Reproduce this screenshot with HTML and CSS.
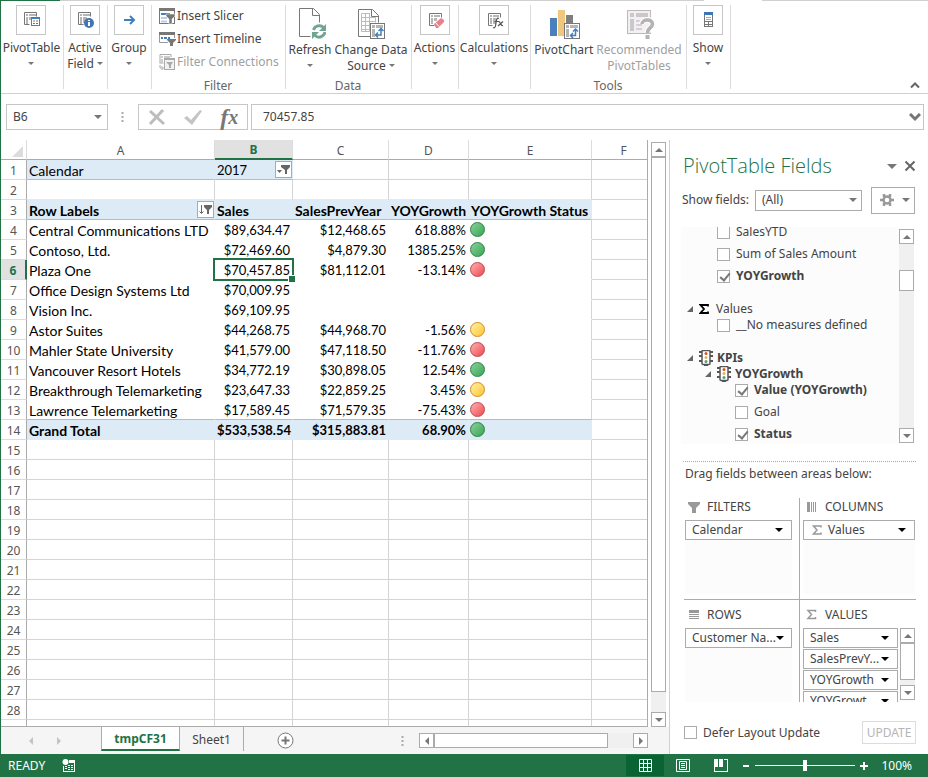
FILE: index.html
```html
<!DOCTYPE html>
<html lang="en">
<head>
<meta charset="utf-8">
<title>PivotTable workbook</title>
<link rel="stylesheet" href="styles.css">
</head>
<body>
<div class="app">
  <div class="tab-edge"><span class="edge-green"></span><span class="edge-gray"></span><span class="edge-open"></span><span class="edge-end"></span></div>
  <header class="ribbon">
    <section class="group g-pivot">
      <button class="big boxed"><span class="box"><svg width="28" height="28" viewBox="1 0 28 28"><path d="M8.500 6.500h12v4M8.500 6.500v12h5" fill="none" stroke="#777"/><path d="M10 8h2v2h-2zM13 8h7v2h-7zM10 11h2v7h-2zM13 11h3v3h-3z" fill="#b5b5b5"/><rect x="15.500" y="11.500" width="8" height="8" fill="#fff" stroke="#777"/><path d="M15 11h9v2h-9z" fill="#3f7fbf"/><path d="M17 15h2M20 15h2M17 17.500h2M20 17.500h2" stroke="#777"/></svg></span><span class="label">PivotTable</span><i class="caret"></i></button>
    </section>
    <section class="group g-small">
      <button class="big boxed"><span class="box"><svg width="28" height="28" viewBox="1 0 28 28"><path d="M8.500 6.500h12v4M8.500 6.500v12h5" fill="none" stroke="#777"/><path d="M10 8h2v2h-2zM13 8h7v2h-7zM10 11h2v7h-2zM13 11h4v6h-4z" fill="#b5b5b5"/><circle cx="19" cy="17" r="5" fill="#3f76b5"/><path d="M18 14h2v1h-2zM18 16h2v4h-2z" fill="#fff"/></svg></span><span class="label">Active<br>Field<i class="caret inline"></i></span></button>
    </section>
    <section class="group g-small">
      <button class="big boxed"><span class="box"><svg width="28" height="28" viewBox="0 0 28 28"><path d="M9 14h9M15 10l4 4-4 4" fill="none" stroke="#3f7fbf" stroke-width="2"/></svg></span><span class="label">Group</span><i class="caret"></i></button>
    </section>
    <section class="group g-filter">
      <div class="rows">
        <button class="small"><svg width="17" height="17" viewBox="0 0 17 17"><rect x=".5" y=".5" width="15" height="15" fill="#fff" stroke="#777"/><path d="M0 0h16v3H0z" fill="#777"/><path d="M2 5h9v2H2z" fill="#3f7fbf"/><path d="M2 9h6v2H2zM2 12.500h6v2H2z" fill="#b9cfe8"/><path d="M7 6h9v2l-3 3v5h-3v-5L7 8z" fill="#777" stroke="#fff" stroke-width=".5"/></svg>Insert Slicer</button>
        <button class="small"><svg width="17" height="17" viewBox="0 0 17 17"><path d="M.5 2v9.500H9M15.500 2v5" fill="none" stroke="#999"/><path d="M0 1h16v3H0z" fill="#777"/><path d="M2 7h2M5 7h3M9 7h2" stroke="#3f7fbf" stroke-width="2"/><path d="M8 8h9v1l-3 3v3h-3v-3L8 9z" fill="#777"/></svg>Insert Timeline</button>
        <button class="small" disabled><svg width="17" height="17" viewBox="0 0 17 17"><path d="M1 9V.500h11V3M.500 9h4" fill="none" stroke="#aaa"/><path d="M2 2h2v2H2zM5 2h6v2H5zM2 5h2v4H2z" fill="#ccc"/><rect x="5.500" y="4.500" width="10" height="11" fill="#f5f0f5" stroke="#aaa"/><path d="M5 4h11v2H5zM7 8h7l-2 3v3h-2v-3z" fill="#aaa"/><path d="M1 11v3h3M2.500 12.500L4.500 14l-2 2" fill="none" stroke="#aaa"/></svg>Filter Connections</button>
      </div>
      <span class="caption">Filter</span>
    </section>
    <section class="group g-data">
      <div class="pair">
        <button class="big plain"><svg width="32" height="32" viewBox="0 0 32 32"><path d="M5.500.500h14l6 6v8M5.500.500v28h11M18.500.500v7h7" fill="#fff" stroke="#777"/><g fill="none" stroke="#72a591" stroke-width="3"><path d="M19.500 22a6 6 0 0 1 10-2.500M31 24a6 6 0 0 1-10 3.500"/></g><path d="M32 16v7h-7zM18 31v-7h7z" fill="#72a591"/></svg><span class="label">Refresh</span><i class="caret"></i></button>
        <button class="big plain"><svg width="32" height="32" viewBox="0 0 32 32"><path d="M3.500 1.500h14l6 6v7M3.500 1.500v27h12M16.500 1.500v7h7" fill="#fff" stroke="#777"/><path d="M6.500 5.500h8v4h6v5M6.500 5.500v18h8M6.500 9.500h8M6.500 13.500h14M6.500 17.500h8M6.500 21.500h8M10.500 5.500v18M14.500 5.500v18" fill="none" stroke="#bbb"/><rect x="15.500" y="15.500" width="14" height="15" fill="#fff" stroke="#777"/><path d="M17 17h3v3h-3zM21 17h7v3h-7zM17 21h3v8h-3z" fill="#b5b5b5"/><path d="M21 27h5v-6M23 24.500L20.500 27l2.500 2.500M23.500 23L26 20.500l2.500 2.500" fill="none" stroke="#3f7fbf" stroke-width="1.500"/></svg><span class="label">Change Data<br>Source<i class="caret inline"></i></span></button>
      </div>
      <span class="caption">Data</span>
    </section>
    <section class="group g-actions">
      <button class="big boxed"><span class="box"><svg width="28" height="28" viewBox="0 0 28 28"><path d="M8.500 7.500h12v4M8.500 7.500v12h5" fill="none" stroke="#777"/><path d="M10 9h2v2h-2zM13 9h6v2h-6zM10 12h2v6h-2zM13 12h3v3h-3z" fill="#b5b5b5"/><path d="M13 18l7-6 3 2v2l-6 6h-2z" fill="#e8818f"/><path d="M14.500 16.500l3.500 4" stroke="#fff"/></svg></span><span class="label">Actions</span><i class="caret"></i></button>
    </section>
    <section class="group g-calc">
      <button class="big boxed"><span class="box"><svg width="28" height="28" viewBox="0 0 28 28"><path d="M8.500 7.500h12v4M8.500 7.500v12h4" fill="none" stroke="#777"/><path d="M10 9h2v2h-2zM13 9h6v2h-6zM10 12h2v6h-2zM13 12h3v6h-3z" fill="#b5b5b5"/><path d="M19 12.500c-2-1-2.500 1-2.800 3l-.7 4.500c-.4 2-1.500 2-2.500 1.500M14.500 15.500h4M18.500 15.500c2-.5 2 5 4.500 4M23 15.500l-5 4.500" fill="none" stroke="#555" stroke-width="1.200"/></svg></span><span class="label">Calculations</span><i class="caret"></i></button>
    </section>
    <section class="group g-tools">
      <div class="pair">
        <button class="big plain"><svg width="32" height="32" viewBox="0 0 32 32"><path d="M2 10h7v18H2z" fill="#4a80bd"/><path d="M10 2h7v26h-7z" fill="#efc77e"/><path d="M18 7h7v8h-7z" fill="#7f7f7f"/><rect x="16.500" y="15.500" width="15" height="15" fill="#fff" stroke="#777"/><path d="M18 17h3v3h-3zM22 17h8v3h-8zM18 21h3v8h-3z" fill="#b5b5b5"/><path d="M23 27.500h4.500V21M25 25l-2.500 2.500L25 30M25 23.500l2.500-2.500 2.500 2.500" fill="none" stroke="#3f7fbf" stroke-width="1.500"/></svg><span class="label">PivotChart</span></button>
        <button class="big plain" disabled><svg width="32" height="32" viewBox="0 0 32 32"><rect x="4.500" y="2.500" width="23" height="23" fill="#f3eff3" stroke="#bdb8bd"/><path d="M7 5h4v4H7zM13 5h12v4H13zM7 11h4v12H7z" fill="#c9c9c9"/><path d="M13 12h6v2h-6zM13 16h6v2h-6zM13 20h6v2h-6z" fill="#d5d0d5"/><path d="M19 16c0-5 10.500-5.500 10.500 0 0 4-5 3.500-5 9" fill="none" stroke="#fff" stroke-width="6"/><path d="M19 16c0-5 10.500-5.500 10.500 0 0 4-5 3.500-5 9" fill="none" stroke="#b3b3b3" stroke-width="3.500"/><path d="M22.500 27h4v4h-4z" fill="#b3b3b3"/></svg><span class="label">Recommended<br>PivotTables</span></button>
      </div>
      <span class="caption">Tools</span>
    </section>
    <section class="group g-small">
      <button class="big boxed"><span class="box"><svg width="28" height="28" viewBox="0 0 28 28"><rect x="10.500" y="7.500" width="8" height="13" fill="#fff" stroke="#777"/><path d="M10 6h9v3h-9z" fill="#3f76b5"/><path d="M12 11.500h5M12 13.500h5" stroke="#aaa"/><path d="M10 15.500h9M10 18.500h9M14.500 15v6" stroke="#777"/></svg></span><span class="label">Show</span><i class="caret"></i></button>
    </section>
    <button class="collapse" aria-label="Collapse ribbon"><svg width="10" height="7" viewBox="0 0 10 7"><path d="M1 5.500L5 1.500l4 4" fill="none" stroke="#666" stroke-width="2"/></svg></button>
  </header>

  <div class="formula-bar">
    <div class="name-box"><input type="text" value="B6" aria-label="Name box"><i class="caret wide"></i></div>
    <svg class="grip" width="3" height="12" viewBox="0 0 3 12"><path d="M.5 1h2v2h-2zM.5 5h2v2h-2zM.5 9h2v2h-2z" fill="#aaa"/></svg>
    <div class="fx-box">
      <button aria-label="Cancel"><svg width="18" height="18" viewBox="0 0 18 18"><path d="M2 3l14 13M15 2L2 16" fill="none" stroke="#bdbdbd" stroke-width="3"/></svg></button>
      <button aria-label="Enter"><svg width="20" height="18" viewBox="0 0 20 18"><path d="M1 10l3-2 4 4L17 2l2 1L9 17z" fill="#c4c4c4"/></svg></button>
      <button aria-label="Insert function" class="fx">f<span>x</span></button>
    </div>
    <div class="formula"><input type="text" value="70457.85" aria-label="Formula"><svg width="12" height="9" viewBox="0 0 12 9"><path d="M1 1l5 5 5-5" fill="none" stroke="#777" stroke-width="3"/></svg></div>
  </div>

  <main class="workspace">
    <div class="sheet-side">
      <div class="sheet-row">
        <table class="grid">
          <colgroup><col class="c-head"><col class="c-a"><col class="c-b"><col class="c-c"><col class="c-d"><col class="c-e"><col></colgroup>
          <thead><tr><th class="corner"><svg width="11" height="11" viewBox="0 0 11 11"><path d="M11 0v11H0z" fill="#dcdcdc"/></svg></th><th>A</th><th class="on">B</th><th>C</th><th>D</th><th>E</th><th>F</th></tr></thead>
          <tbody>
            <tr class="page-filter"><th>1</th><td>Calendar</td><td><div class="with-btn">2017<button class="filter" aria-label="Filter calendar"><svg width="15" height="15" viewBox="0 0 15 15"><path d="M5 3h9v2l-3 3v4H9V8L5 5z" fill="#666"/><path d="M1 8h5l-2.500 3z" fill="#666"/></svg></button></div></td><td></td><td></td><td></td><td></td></tr>
            <tr class="before-head"><th>2</th><td></td><td></td><td></td><td></td><td></td><td></td></tr>
            <tr class="pivot-head"><th>3</th><td><div class="with-btn">Row Labels<button class="filter" aria-label="Filter rows"><svg width="15" height="15" viewBox="0 0 15 15"><path d="M6 3h8v2l-3 3v4H9V8L6 5z" fill="#666"/><path d="M3.500 3v8M1.500 9.500l2 2 2-2" fill="none" stroke="#666"/></svg></button></div></td><td>Sales</td><td>SalesPrevYear</td><td>YOYGrowth</td><td>YOYGrowth Status</td><td></td></tr>
            <tr class="pv"><th>4</th><td>Central Communications LTD</td><td>$89,634.47</td><td>$12,468.65</td><td>618.88%</td><td><i class="kpi green"></i></td><td></td></tr>
            <tr class="pv"><th>5</th><td>Contoso, Ltd.</td><td>$72,469.60</td><td>$4,879.30</td><td>1385.25%</td><td><i class="kpi green"></i></td><td></td></tr>
            <tr class="pv"><th class="on">6</th><td>Plaza One</td><td class="selected">$70,457.85</td><td>$81,112.01</td><td>-13.14%</td><td><i class="kpi red"></i></td><td></td></tr>
            <tr class="pv"><th>7</th><td>Office Design Systems Ltd</td><td>$70,009.95</td><td></td><td></td><td></td><td></td></tr>
            <tr class="pv"><th>8</th><td>Vision Inc.</td><td>$69,109.95</td><td></td><td></td><td></td><td></td></tr>
            <tr class="pv"><th>9</th><td>Astor Suites</td><td>$44,268.75</td><td>$44,968.70</td><td>-1.56%</td><td><i class="kpi yellow"></i></td><td></td></tr>
            <tr class="pv"><th>10</th><td>Mahler State University</td><td>$41,579.00</td><td>$47,118.50</td><td>-11.76%</td><td><i class="kpi red"></i></td><td></td></tr>
            <tr class="pv"><th>11</th><td>Vancouver Resort Hotels</td><td>$34,772.19</td><td>$30,898.05</td><td>12.54%</td><td><i class="kpi green"></i></td><td></td></tr>
            <tr class="pv"><th>12</th><td>Breakthrough Telemarketing</td><td>$23,647.33</td><td>$22,859.25</td><td>3.45%</td><td><i class="kpi yellow"></i></td><td></td></tr>
            <tr class="pv last"><th>13</th><td>Lawrence Telemarketing</td><td>$17,589.45</td><td>$71,579.35</td><td>-75.43%</td><td><i class="kpi red"></i></td><td></td></tr>
            <tr class="pv total"><th>14</th><td>Grand Total</td><td>$533,538.54</td><td>$315,883.81</td><td>68.90%</td><td><i class="kpi green"></i></td><td></td></tr>
            <tr><th>15</th><td></td><td></td><td></td><td></td><td></td><td></td></tr>
            <tr><th>16</th><td></td><td></td><td></td><td></td><td></td><td></td></tr>
            <tr><th>17</th><td></td><td></td><td></td><td></td><td></td><td></td></tr>
            <tr><th>18</th><td></td><td></td><td></td><td></td><td></td><td></td></tr>
            <tr><th>19</th><td></td><td></td><td></td><td></td><td></td><td></td></tr>
            <tr><th>20</th><td></td><td></td><td></td><td></td><td></td><td></td></tr>
            <tr><th>21</th><td></td><td></td><td></td><td></td><td></td><td></td></tr>
            <tr><th>22</th><td></td><td></td><td></td><td></td><td></td><td></td></tr>
            <tr><th>23</th><td></td><td></td><td></td><td></td><td></td><td></td></tr>
            <tr><th>24</th><td></td><td></td><td></td><td></td><td></td><td></td></tr>
            <tr><th>25</th><td></td><td></td><td></td><td></td><td></td><td></td></tr>
            <tr><th>26</th><td></td><td></td><td></td><td></td><td></td><td></td></tr>
            <tr><th>27</th><td></td><td></td><td></td><td></td><td></td><td></td></tr>
            <tr><th>28</th><td></td><td></td><td></td><td></td><td></td><td></td></tr>
            <tr class="cut"><th></th><td></td><td></td><td></td><td></td><td></td><td></td></tr>
          </tbody>
        </table>
        <div class="vscroll sheet-scroll"><button class="sb" aria-label="Scroll up"><i class="tri up"></i></button><span class="thumb"></span><span class="track"></span><button class="sb" aria-label="Scroll down"><i class="tri down"></i></button></div>
      </div>
      <nav class="tabs">
        <div class="tab-nav"><button aria-label="Previous sheet"><i class="tri left pale"></i></button><button aria-label="Next sheet"><i class="tri right pale"></i></button></div>
        <button class="tab active">tmpCF31</button>
        <button class="tab">Sheet1</button>
        <button class="add" aria-label="New sheet"><svg width="17" height="17" viewBox="0 0 17 17"><circle cx="8.500" cy="8.500" r="7.500" fill="#fff" stroke="#777"/><path d="M4.500 8.500h8M8.500 4.500v8" stroke="#777" stroke-width="2"/></svg></button>
        <svg class="grip" width="3" height="12" viewBox="0 0 3 12"><path d="M.5 1h2v2h-2zM.5 5h2v2h-2zM.5 9h2v2h-2z" fill="#aaa"/></svg>
        <div class="hscroll"><button class="sb" aria-label="Scroll left"><i class="tri left"></i></button><span class="thumb"></span><span class="track"></span><button class="sb" aria-label="Scroll right"><i class="tri right"></i></button></div>
      </nav>
    </div>

    <aside class="pane">
      <div class="pane-title"><h2>PivotTable Fields</h2><button aria-label="Pane options"><i class="caret title-caret"></i></button><button aria-label="Close"><svg width="12" height="12" viewBox="0 0 12 12"><path d="M1.500 1.500l9 9M10.500 1.500l-9 9" stroke="#666" stroke-width="2"/></svg></button></div>
      <div class="show-fields">
        <label for="show">Show fields:</label>
        <span class="select"><select id="show"><option>(All)</option></select><i class="caret wide"></i></span>
        <button class="gear" aria-label="Tools"><svg width="14" height="14" viewBox="0 0 14 14"><circle cx="7" cy="7" r="3.500" fill="none" stroke="#999" stroke-width="2.500"/><path d="M4 1v3M10 1v3M4 10v3M10 10v3M0 7h3M11 7h3" stroke="#999" stroke-width="2.500"/></svg><i class="caret wide"></i></button>
      </div>
      <div class="field-box">
        <div class="field-list">
          <label class="item d1"><input type="checkbox">SalesYTD</label>
          <label class="item d1 gap"><input type="checkbox">Sum of Sales Amount</label>
          <label class="item d1 gap"><input type="checkbox" checked><b>YOYGrowth</b></label>
          <div class="item section"><i class="expand"></i><svg width="10" height="10" viewBox="0 0 10 10"><path d="M9 2.500V1H1.500L5 5 1.500 9H9V7.500" fill="none" stroke="#000" stroke-width="1.800"/></svg><span class="values-name">Values</span></div>
          <label class="item d1"><input type="checkbox">__No measures defined</label>
          <div class="item section"><i class="expand"></i><svg width="14" height="16" viewBox="0 0 14 16"><path d="M0 2h3M0 6h3M0 11h3M11 2h3M11 6h3M11 11h3M5 15.500h4" stroke="#555" stroke-width="2"/><rect x="3" y=".5" width="8" height="14" rx="1" fill="#fff" stroke="#555" stroke-width="1.500"/><circle cx="7" cy="3.500" r="1.500" fill="#d9542b"/><circle cx="7" cy="7.500" r="1.500" fill="#eab14d"/><circle cx="7" cy="11.500" r="1.500" fill="#4fa08a"/></svg><b>KPIs</b></div>
          <div class="item sub"><i class="expand"></i><svg width="14" height="16" viewBox="0 0 14 16"><path d="M0 2h3M0 6h3M0 11h3M11 2h3M11 6h3M11 11h3M5 15.500h4" stroke="#555" stroke-width="2"/><rect x="3" y=".5" width="8" height="14" rx="1" fill="#fff" stroke="#555" stroke-width="1.500"/><circle cx="7" cy="3.500" r="1.500" fill="#d9542b"/><circle cx="7" cy="7.500" r="1.500" fill="#eab14d"/><circle cx="7" cy="11.500" r="1.500" fill="#4fa08a"/></svg><b>YOYGrowth</b></div>
          <label class="item d2"><input type="checkbox" checked><b>Value (YOYGrowth)</b></label>
          <label class="item d2 gap"><input type="checkbox">Goal</label>
          <label class="item d2 gap"><input type="checkbox" checked><b>Status</b></label>
        </div>
        <div class="vscroll list-scroll"><button class="sb" aria-label="Scroll up"><i class="tri up"></i></button><span class="track lead"></span><span class="thumb"></span><span class="track"></span><button class="sb" aria-label="Scroll down"><i class="tri down"></i></button></div>
      </div>
      <p class="drag">Drag fields between areas below:</p>
      <div class="areas">
        <section class="area left top"><h3><svg width="12" height="12" viewBox="0 0 12 12"><path d="M0 1h12v2L8 7v5H4V7L0 3z" fill="#999"/></svg>FILTERS</h3><div class="drop"><button class="chip">Calendar<i class="tri down black"></i></button></div></section>
        <section class="area right top"><h3><svg width="12" height="12" viewBox="0 0 12 12"><path d="M1 1h3v10H1zM5 1h1v10H5zM7 1h1v10H7zM9 1h1v10H9z" fill="#999"/></svg>COLUMNS</h3><div class="drop"><button class="chip"><svg width="10" height="10" viewBox="0 0 10 10"><path d="M9 2.500V1H1.500L5 5 1.500 9H9V7.500" fill="none" stroke="#999" stroke-width="1.500"/></svg>Values<i class="tri down black"></i></button></div></section>
        <section class="area left"><h3><svg width="12" height="12" viewBox="0 0 12 12"><path d="M1 1h10v3H1zM1 5h10v1H1zM1 7h10v1H1zM1 9h10v1H1z" fill="#999"/></svg>ROWS</h3><div class="drop"><button class="chip">Customer Na...<i class="tri down black"></i></button></div></section>
        <section class="area right"><h3><svg width="12" height="12" viewBox="0 0 12 12"><path d="M9.500 3V1.500H2L5.500 5.500 2 9.500h7.500V8" fill="none" stroke="#999" stroke-width="1.500"/></svg>VALUES</h3><div class="drop scrolling"><div class="chips"><button class="chip">Sales<i class="tri down black"></i></button><button class="chip">SalesPrevY...<i class="tri down black"></i></button><button class="chip">YOYGrowth<i class="tri down black"></i></button><button class="chip">YOYGrowt...<i class="tri down black"></i></button></div>
          <div class="vscroll area-scroll"><button class="sb" aria-label="Scroll up"><i class="tri up"></i></button><span class="thumb"></span><span class="track"></span><button class="sb" aria-label="Scroll down"><i class="tri down"></i></button></div></div></section>
      </div>
      <div class="defer"><label><input type="checkbox">Defer Layout Update</label><button disabled>UPDATE</button></div>
    </aside>
  </main>

  <footer class="status">
    <span>READY</span>
    <svg class="macro" width="14" height="14" viewBox="0 0 14 14"><path d="M7 1h6v3H7zM1 7h1v6H1zM1 12h12v1H1zM12 4h1v9h-1z" fill="#fff"/><path d="M3 7h2v1H3zM6 6h2v1H6zM9 6h2v1H9zM3 9h2v1H3zM6 8h2v1H6zM9 8h2v1H9zM3 11h2M6 10h2v1H6zM9 10h2v1H9z" fill="#fff"/><circle cx="3.500" cy="3" r="3" fill="#fff"/></svg>
    <button class="view on" aria-label="Normal view"><svg width="13" height="13" viewBox="0 0 13 13"><path d="M.5.5h12v12H.5zM4.500 0v13M8.500 0v13M0 4.500h13M0 8.500h13" fill="none" stroke="#fff"/></svg></button>
    <button class="view" aria-label="Page layout"><svg width="14" height="13" viewBox="0 0 14 13"><path d="M.5.5h13v12H.5zM3.500 2.500h7v8h-7zM5 4.500h4M5 6.500h4M5 8.500h4" fill="none" stroke="#fff"/></svg></button>
    <button class="view" aria-label="Page break preview"><svg width="14" height="13" viewBox="0 0 14 13"><path d="M0 0h4v8H0zM5 0h4v8H5zM13 0h1v13h-1zM0 12h14v1H0zM0 8h1v5H0zM10 0h4v1h-4z" fill="#fff"/></svg></button>
    <button class="zoom-btn" aria-label="Zoom out"><svg width="8" height="8" viewBox="0 0 8 8"><path d="M1 4h6" stroke="#fff" stroke-width="2"/></svg></button>
    <input class="zoom" type="range" min="0" max="100" value="50" aria-label="Zoom">
    <button class="zoom-btn" aria-label="Zoom in"><svg width="8" height="8" viewBox="0 0 8 8"><path d="M0 4h8M4 0v8" stroke="#fff" stroke-width="2"/></svg></button>
    <span class="percent">100%</span>
  </footer>
</div>
</body>
</html>
```
FILE: styles.css
```css
* { box-sizing: border-box; }
body { margin: 0; background: #fff; color: #444; font: 12px/16px "Noto Sans", "Open Sans", sans-serif; }
button, input, select { font: inherit; color: inherit; margin: 0; padding: 0; border: 0; background: none; border-radius: 0; }
button { display: flex; align-items: center; justify-content: center; white-space: nowrap; }
svg { display: block; flex: none; }
h2, h3, p { margin: 0; font-weight: 400; }

.app { display: flex; flex-direction: column; min-height: 100vh; border-left: 1px solid #217346; }

.tab-edge { display: flex; height: 1px; }
.edge-green { width: 59px; background: #217346; }
.edge-gray { width: 644px; background: #d0d0d0; }
.edge-open { width: 58px; }
.edge-end { flex: 1; background: #d0d0d0; }

/* Ribbon */
.ribbon { display: flex; height: 93px; padding-top: 4px; border-bottom: 1px solid #d0d0d0; }
.group { position: relative; display: flex; flex-direction: column; align-items: center; padding-right: 2px; }
.group::after { content: ""; position: absolute; top: 0; right: 0; bottom: 4px; width: 1px; background: #dcdcdc; }
.g-pivot { width: 63px; }
.g-small { width: 44px; }
.g-filter { width: 134px; }
.g-data { width: 126px; }
.g-actions { width: 47px; }
.g-calc { width: 72px; }
.g-tools { width: 156px; }
.big { flex-direction: column; justify-content: flex-start; text-align: center; }
.box { border: 1px solid #c6c6c6; margin-bottom: 5px; }
.plain { padding-top: 3px; gap: 2px; }
.plain .caret { margin-top: 4px; }
.pair { display: flex; justify-content: center; gap: 3px; flex: 1; }
.pair .big { height: 70px; }
.rows { display: flex; flex-direction: column; gap: 7px; width: 100%; padding: 3px 0 0 7px; flex: 1; }
.small { justify-content: flex-start; gap: 1px; height: 16px; }
.caption { line-height: 15px; color: #666; }
button:disabled { color: #a0a0a0; }
.caret { flex: none; width: 0; height: 0; border: 3px solid transparent; border-top-color: #777; border-bottom: 0; }
.caret.wide { border-width: 4px; border-bottom: 0; }
.caret.inline { display: inline-block; margin-left: 3px; vertical-align: 3px; }
.boxed > .caret { margin-top: 6px; }
.collapse { margin: auto 8px 4px auto; }

/* Formula bar */
.formula-bar { display: flex; align-items: center; height: 46px; padding: 0 4px 0 5px; }
.name-box, .fx-box, .formula { display: flex; align-items: center; height: 26px; border: 1px solid #c6c6c6; }
.name-box { width: 102px; padding: 0 5px 0 6px; }
.name-box input { flex: 1; min-width: 0; }
.formula-bar .grip { margin: 0 14px 0 13px; }
.fx-box { width: 110px; margin-right: 3px; justify-content: space-around; }
.fx { font: italic bold 24px/24px "Liberation Serif", serif; color: #777; }
.fx span { font-size: 20px; }
.formula { flex: 1; padding: 0 2px 0 11px; }
.formula input { flex: 1; }

/* Worksheet */
.workspace { display: flex; flex: 1; }
.sheet-side { display: flex; flex-direction: column; flex: 1; min-width: 0; border-right: 1px solid #d0d0d0; }
.sheet-row { display: flex; }
.grid { flex: 1; table-layout: fixed; width: 0; border-spacing: 0; border-right: 1px solid #ababab; border-bottom: 1px solid #ababab; color: #000; font: 13px/17px Lato, sans-serif; }
.c-head { width: 26px; }
.c-a { width: 188px; }
.c-b { width: 78px; }
.c-c { width: 96px; }
.c-d { width: 80px; }
.c-e { width: 123px; }
.grid th { height: 20px; padding: 2px 0 0; border-bottom: 1px solid #dcdcdc; font: 12px/17px "Noto Sans", sans-serif; color: #555; text-align: center; }
.grid thead th { border-right: 1px solid #dcdcdc; border-bottom-color: #ababab; }
.grid thead th:last-child { border-right: 0; padding-left: 8px; }
.corner svg { margin: 2px 3px 0 auto; }
.grid tbody th { border-right: 1px solid #ababab; }
.grid th.on { background: #e1e1e1; color: #217346; font-weight: 700; }
.grid thead th.on { border-bottom: 2px solid #217346; line-height: 16px; }
.grid tbody th.on { border-right: 2px solid #217346; }
.grid td { height: 20px; padding: 2px 2px 0; border-right: 1px solid #d4d4d4; border-bottom: 1px solid #d4d4d4; white-space: nowrap; }
.grid td:last-child { border-right: 0; }
.grid td:nth-child(2), .pivot-head td { font-size: 14px; }
.grid .cut th, .grid .cut td { height: 6px; border-bottom: 0; }
.page-filter td:nth-child(-n+3), .pivot-head td:nth-child(-n+6) { background: #ddebf7; border-right-color: #ddebf7; border-bottom-color: #9bc2e6; }
.before-head td:nth-child(-n+6) { border-bottom-color: #ddebf7; }
.pivot-head td { font-weight: 700; }
.pv td:nth-child(-n+6) { border-bottom-color: transparent; }
.pv td:nth-child(-n+5) { border-right-color: transparent; }
.pv td:nth-child(n+3):nth-child(-n+5) { text-align: right; }
.last td:nth-child(-n+6) { border-bottom-color: #9bc2e6; }
.total td:nth-child(-n+6) { background: #ddebf7; border-color: #ddebf7; font-weight: 700; }
.with-btn { display: flex; justify-content: space-between; align-items: center; height: 17px; }
.filter { width: 17px; height: 17px; margin: -1px -2px 1px 0; border: 1px solid #ababab; background: #fff; }
.selected { position: relative; }
.selected::before { content: ""; position: absolute; inset: -2px; border: 2px solid #217346; }
.selected::after { content: ""; position: absolute; right: -3px; bottom: -3px; width: 6px; height: 6px; background: #217346; border: solid #fff; border-width: 1px 0 0 1px; }
.kpi { display: block; width: 15px; height: 15px; border: 1px solid; border-radius: 50%; margin: -2px 0 0 -1px; }
.kpi.green { background: linear-gradient(135deg, #8ccf9b, #35a853); border-color: #2f7d45; }
.kpi.red { background: linear-gradient(135deg, #ffb0b0, #ee4a50); border-color: #b5494c; }
.kpi.yellow { background: linear-gradient(135deg, #fff0a8, #ffc62e); border-color: #d08a2c; }

/* Scroll bars */
.vscroll { display: flex; flex-direction: column; width: 15px; flex: none; }
.hscroll { display: flex; height: 15px; width: 229px; }
.sb { width: 15px; height: 15px; flex: none; border: 1px solid #ababab; background: #fff; }
.thumb { border: 1px solid #ababab; background: #fff; }
.track { flex: 1; background: #f0f0f0; }
.tri { flex: none; width: 0; height: 0; border: 4px solid transparent; }
.tri.up { border-top: 0; border-bottom-color: #777; }
.tri.down { border-bottom: 0; border-top-color: #777; }
.tri.left { border-left: 0; border-right-color: #777; }
.tri.right { border-right: 0; border-left-color: #777; }
.tri.down.black { border-top-color: #000; }
.tri.left.pale { border-right-color: #c4c4c4; }
.tri.right.pale { border-left-color: #c4c4c4; }
.sheet-scroll { margin: 2px 3px 0; }
.sheet-scroll .thumb { flex: 0 0 535px; }

/* Sheet tabs */
.tabs { display: flex; align-items: center; flex: 1; background: #f5f5f5; padding-right: 21px; }
.tab-nav { display: flex; gap: 20px; width: 100px; padding-left: 26px; }
.tab-nav button { width: 8px; }
.tab { align-self: flex-start; height: 24px; width: 64px; padding-top: 2px; border-right: 1px solid #ababab; }
.tab.active { width: 79px; color: #217346; font-weight: 700; background: #fff; border-left: 1px solid #ababab; border-bottom: 2px solid #217346; }
.add { margin-left: 33px; }
.tabs .grip { margin: 0 15px 0 auto; }
.hscroll .thumb { flex: 0 0 174px; }

/* Field pane */
.pane { width: 258px; flex: none; display: flex; flex-direction: column; padding: 0 12px 0 11px; }
.pane-title { display: flex; align-items: center; height: 46px; padding: 6px 0 0 2px; gap: 7px; }
.pane-title h2 { flex: 1; font: 300 20px/28px "Open Sans", "Noto Sans", sans-serif; color: #217346; }
.title-caret { border-width: 5px; border-bottom: 0; }
.show-fields { display: flex; align-items: center; height: 28px; margin-right: 1px; }
.show-fields label { flex: 1; padding-left: 1px; white-space: nowrap; }
.select { display: flex; align-items: center; width: 107px; height: 21px; border: 1px solid #ababab; padding: 0 4px 0 6px; }
.select select { flex: 1; appearance: none; }
.gear { width: 44px; height: 27px; margin-left: 9px; border: 1px solid #ababab; gap: 8px; padding-left: 4px; }
.field-box { display: flex; height: 217px; margin: 13px 2px 0 0; }
.field-list { flex: 1; display: flex; flex-direction: column; justify-content: flex-end; overflow: hidden; background: #fcfcfc; padding-bottom: 2px; }
.item { display: flex; align-items: center; flex: none; height: 16px; white-space: nowrap; }
.item.gap { margin-top: 6px; }
.d1 { padding-left: 36px; }
.d2 { padding-left: 54px; }
.section { margin-top: 17px; padding-left: 6px; gap: 4px; }
.sub { padding-left: 24px; gap: 4px; }
.section svg, .sub svg { margin-left: 2px; }
.values-name { padding-left: 3px; }
.expand { width: 0; height: 0; border: 0 solid transparent; border-left-width: 6px; border-bottom: 6px solid #666; }
input[type="checkbox"] { appearance: none; flex: none; width: 13px; height: 13px; margin-right: 6px; border: 1px solid #ababab; background: #fff; }
input[type="checkbox"]:checked::before { content: ""; display: block; width: 4px; height: 8px; margin: 0 0 0 4px; border: solid #777; border-width: 0 2px 2px 0; transform: rotate(40deg); }
.list-scroll { padding: 2px 0 1px; }
.list-scroll .lead { flex: 0 0 26px; }
.list-scroll .thumb { flex: 0 0 21px; }
.drag { margin: 17px 0 0 2px; padding: 4px 0 0 2px; border-top: 1px dotted #ababab; }
.areas { display: grid; grid-template-columns: 116px 1fr; margin: 16px 0 0 3px; }
.area h3 { display: flex; align-items: center; gap: 7px; height: 18px; padding-left: 3px; font-size: 12px; }
.area.left { border-right: 1px solid #ababab; padding: 0 7px 0 1px; }
.area.right { padding: 0 1px 0 3px; }
.area.top { border-bottom: 1px solid #ababab; height: 102px; }
.area:not(.top) h3 { margin-top: 6px; }
.drop { margin-top: 4px; height: 74px; overflow: hidden; background: #fcfcfc; }
.chip { justify-content: flex-start; width: 100%; height: 20px; padding: 0 8px 0 6px; border: 1px solid #ababab; background: #fff; }
.chip svg { margin: 0 6px 0 2px; }
.chip .tri { margin-left: auto; }
.scrolling { display: flex; gap: 2px; }
.chips { flex: 1; display: flex; flex-direction: column; gap: 1px; }
.chips .chip { flex: none; }
.area-scroll { height: 72px; }
.area-scroll .thumb { flex: 0 0 37px; }
.defer { display: flex; align-items: center; justify-content: space-between; margin: 18px 0 0 3px; height: 25px; }
.defer label { display: flex; align-items: center; white-space: nowrap; }
.defer button { width: 54px; height: 23px; border: 1px solid #dcdcdc; color: #b5b5b5; }

/* Status bar */
.status { display: flex; align-items: center; height: 23px; padding: 0 16px 0 8px; margin-left: -1px; background: #217346; color: #fff; }
.macro { margin: 0 auto 0 17px; }
.view { width: 38px; height: 21px; }
.view.on { background: #0a6332; }
.zoom-btn { width: 12px; height: 16px; }
.zoom { appearance: none; width: 100px; height: 14px; margin: 0 3px; background: linear-gradient(#fff, #fff) center / 100% 1px no-repeat; }
.zoom::-webkit-slider-thumb { appearance: none; width: 4px; height: 11px; background: #fff; }
.percent { margin-left: 11px; }
```
